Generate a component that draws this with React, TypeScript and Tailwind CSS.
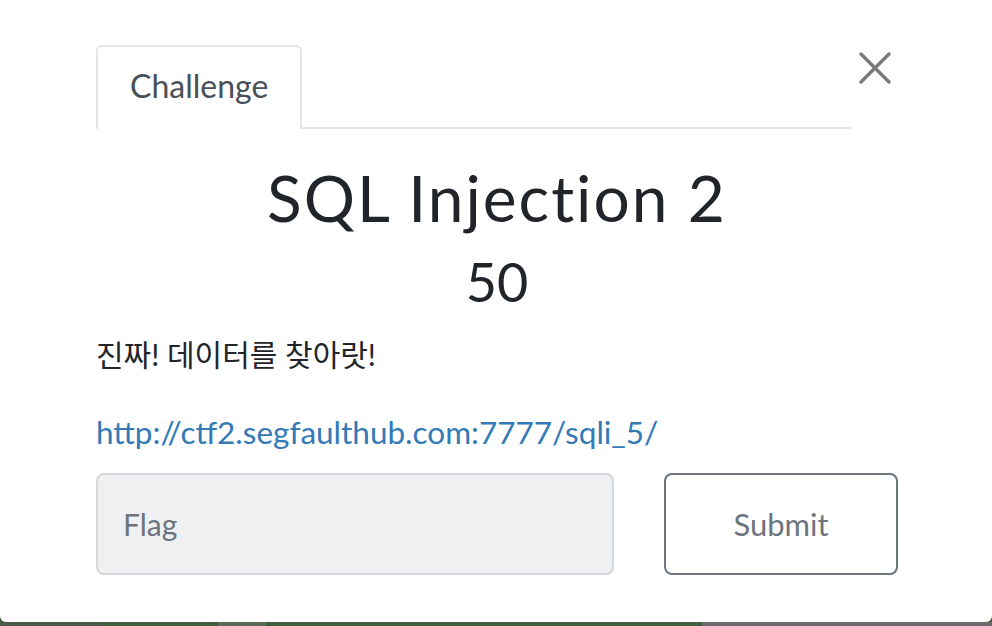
import React from 'react';

export default function App() {
  return (
    <div className="w-[992px] h-[626px] flex flex-col bg-[#3f5f3c] overflow-hidden" style={{ fontFamily: 'Lato, "Noto Sans CJK KR", sans-serif' }}>
      {/* modal */}
      <div className="h-[622px] bg-white rounded-b-[6px] px-[94px] pl-[96px] pt-[45px]">
        {/* header: tabs + close */}
        <div className="flex items-start">
          <div className="w-[755px] flex border-b-2 border-[#e3e5e7]">
            <div className="-mb-[2px] h-[84px] w-[206px] flex items-center pl-[32px] pb-[4px] bg-white border-2 border-b-0 border-[#e3e5e7] rounded-t-[6px] text-[32px] text-[#495057]">
              Challenge
            </div>
          </div>
          <button className="flex-1 flex justify-center mt-[6px]">
            <svg width="34" height="34" viewBox="0 0 34 34" fill="none" stroke="#7a7a7a" strokeWidth="3.4" strokeLinecap="round">
              <path d="M3 3 L31 31 M31 3 L3 31" />
            </svg>
          </button>
        </div>

        {/* title */}
        <h2 className="mt-[30px] text-center text-[64px] leading-[77px] tracking-[2px] text-[#212529] font-normal">
          SQL Injection 2
        </h2>
        <h3 className="mt-[12px] text-center text-[54px] leading-[67px] text-[#212529] font-normal">
          50
        </h3>

        {/* description */}
        <p className="mt-[15px] text-[30px] leading-[48px] text-[#212529]">진짜! 데이터를 찾아랏!</p>
        <p className="mt-[30px] text-[31.5px] leading-[48px]">
          <a className="text-[#337ab7]">http://ctf2.segfaulthub.com:7777/sqli_5/</a>
        </p>

        {/* flag form */}
        <div className="mt-[17px] flex gap-[50px]">
          <div className="w-[518px] h-[102px] flex items-center pl-[25px] bg-[#eff0f1] border-2 border-[#d4d7db] rounded-[8px] text-[30px] text-[#6c757d]">
            Flag
          </div>
          <button className="w-[234px] h-[102px] flex items-center justify-center bg-white border-2 border-[#6c757d] rounded-[8px] text-[31px] text-[#6c757d]">
            Submit
          </button>
        </div>
      </div>

      {/* backdrop strip */}
      <div className="flex flex-1">
        <div className="w-[101px] bg-[#4a5a48]" />
        <div className="w-[117px] bg-[#3f5f3c]" />
        <div className="w-[48px] bg-[#5b6a59]" />
        <div className="w-[436px] bg-[#3f5f3c]" />
        <div className="flex-1 bg-[#6b6b6b]" />
      </div>
    </div>
  );
}
